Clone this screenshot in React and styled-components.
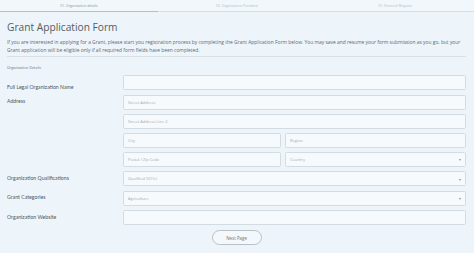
import React from "react";
import styled, { createGlobalStyle } from "styled-components";

const Global = createGlobalStyle`
  html, body { margin: 0; padding: 0; background: #edf5fb; }
  body { width: 474px; height: 253px; overflow: hidden; font-family: "Open Sans", "Liberation Sans", sans-serif; }
  * { box-sizing: border-box; }
`;

const Page = styled.div`
  width: 474px;
  height: 253px;
  background: #edf5fb;
`;

const Tabs = styled.div`
  display: grid;
  grid-template-columns: repeat(3, 1fr);
  height: 12px;
  background: #f1f7fb;
`;

const Tab = styled.div`
  display: flex;
  align-items: center;
  justify-content: center;
  font-size: 3.4px;
  color: ${p => (p.$active ? "#8a949b" : "#b4bec5")};
  border-bottom: 1.5px solid ${p => (p.$active ? "#b3bec6" : "#d4dee5")};
`;

const Content = styled.div`
  padding: 0 8px 0 7px;
`;

const Title = styled.h1`
  margin: 9px 0 0;
  font-size: 10.2px;
  line-height: 12px;
  font-weight: 400;
  color: #555b60;
`;

const Intro = styled.p`
  margin: 6px 0 0;
  max-width: 457px;
  font-size: 4.9px;
  line-height: 7.5px;
  color: #62686d;
`;

const Divider = styled.hr`
  margin: 2px 0 0;
  border: 0;
  border-top: 1px solid #d9e1e6;
`;

const Section = styled.div`
  margin-top: 8px;
  font-size: 3.6px;
  line-height: 6px;
  color: #6a7075;
`;

const Form = styled.div`
  margin-top: 4px;
  display: flex;
  flex-direction: column;
  gap: 4.5px;
`;

const Row = styled.div`
  display: grid;
  grid-template-columns: 116px 1fr;
  align-items: start;
`;

const Label = styled.div`
  font-family: "Lato", "Open Sans", sans-serif;
  font-size: 5.2px;
  line-height: 6px;
  color: #4f555a;
  padding-top: ${p => p.$top}px;
`;

const Stack = styled.div`
  display: flex;
  flex-direction: column;
  gap: 4px;
`;

const Pair = styled.div`
  display: grid;
  grid-template-columns: 158px 1fr;
  gap: 4px;
`;

const Field = styled.div`
  position: relative;
  height: 15px;
  background: #f6fafd;
  border: 1px solid #d3dce2;
  border-radius: 1.5px;
  display: flex;
  align-items: center;
  padding-left: 4px;
  font-size: 4px;
  color: #a3aab0;
`;

const Caret = styled.span`
  position: absolute;
  right: 4px;
  top: 50%;
  transform: translateY(-50%);
  font-size: 3.5px;
  color: #8e969c;
`;

const Actions = styled.div`
  display: flex;
  justify-content: center;
  margin-top: 5px;
`;

const Button = styled.button`
  width: 50px;
  height: 15px;
  border: 1px solid #b9c1c7;
  border-radius: 8px;
  background: #f3f8fc;
  font-family: "Open Sans", sans-serif;
  font-size: 4.4px;
  color: #6b7278;
  padding: 0;
`;

const Select = ({ children }) => (
  <Field>
    {children}
    <Caret>▾</Caret>
  </Field>
);

export default function App() {
  return (
    <Page>
      <Global />
      <Tabs>
        <Tab $active>01. Organization details</Tab>
        <Tab>02. Organization President</Tab>
        <Tab>03. Financial Request</Tab>
      </Tabs>
      <Content>
        <Title>Grant Application Form</Title>
        <Intro>
          If you are interested in applying for a Grant, please start you registration process by completing the Grant
          Application Form below. You may save and resume your form submission as you go, but your Grant application will
          be eligible only if all required form fields have been completed.
        </Intro>
        <Divider />
        <Section>Organization Details</Section>
        <Form>
          <Row>
            <Label $top={9}>Full Legal Organization Name</Label>
            <Field />
          </Row>
          <Row>
            <Label $top={3}>Address</Label>
            <Stack>
              <Field>Street Address</Field>
              <Field>Street Address Line 2</Field>
              <Pair>
                <Field>City</Field>
                <Field>Region</Field>
              </Pair>
              <Pair>
                <Field>Postal / Zip Code</Field>
                <Select>Country</Select>
              </Pair>
            </Stack>
          </Row>
          <Row>
            <Label $top={3.5}>Organization Qualifications</Label>
            <Select>Qualified 501(c)</Select>
          </Row>
          <Row>
            <Label $top={3.5}>Grant Categories</Label>
            <Select>Agriculture</Select>
          </Row>
          <Row>
            <Label $top={3.5}>Organization Website</Label>
            <Field />
          </Row>
        </Form>
        <Actions>
          <Button>Next Page</Button>
        </Actions>
      </Content>
    </Page>
  );
}
